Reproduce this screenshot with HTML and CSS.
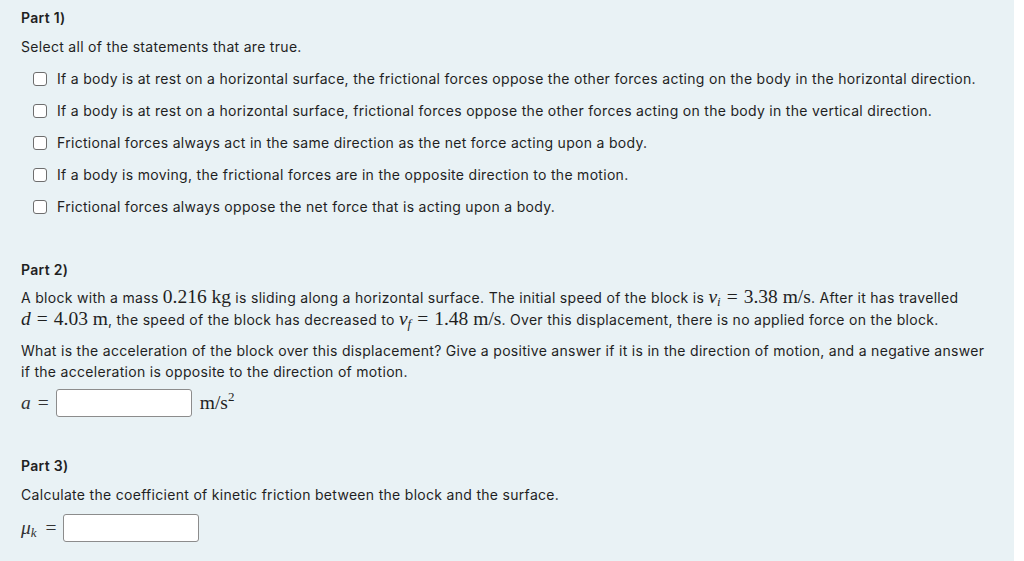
FILE: index.html
```html
<!DOCTYPE html>
<html>
<head>
<meta charset="utf-8">
<link rel="stylesheet" href="styles.css">
</head>
<body>
<div class="page">
  <section class="part part1">
    <h2 class="heading">Part 1)</h2>
    <p class="text">Select all of the statements that are true.</p>
    <ul class="choices">
      <li class="choice"><span class="box"></span><span>If a body is at rest on a horizontal surface, the frictional forces oppose the other forces acting on the body in the horizontal direction.</span></li>
      <li class="choice"><span class="box"></span><span>If a body is at rest on a horizontal surface, frictional forces oppose the other forces acting on the body in the vertical direction.</span></li>
      <li class="choice"><span class="box"></span><span>Frictional forces always act in the same direction as the net force acting upon a body.</span></li>
      <li class="choice"><span class="box"></span><span>If a body is moving, the frictional forces are in the opposite direction to the motion.</span></li>
      <li class="choice"><span class="box"></span><span>Frictional forces always oppose the net force that is acting upon a body.</span></li>
    </ul>
  </section>
  <section class="part part2">
    <h2 class="heading">Part 2)</h2>
    <p class="text para">A block with a mass <span class="m">0.216&nbsp;kg</span> is sliding along a horizontal surface. The initial speed of the block is <span class="m"><i>v</i><sub><i>i</i></sub><span class="eq">=</span>3.38&nbsp;m/s</span>. After it has travelled <span class="m"><i>d</i><span class="eq">=</span>4.03&nbsp;m</span>, the speed of the block has decreased to <span class="m"><i>v</i><sub><i>f</i></sub><span class="eq">=</span>1.48&nbsp;m/s</span>. Over this displacement, there is no applied force on the block.</p>
    <p class="text para2">What is the acceleration of the block over this displacement? Give a positive answer if it is in the direction of motion, and a negative answer if the acceleration is opposite to the direction of motion.</p>
    <div class="answer">
      <span class="m label"><i>a</i><span class="eq">=</span></span>
      <span class="field"></span>
      <span class="m unit">m/s<sup>2</sup></span>
    </div>
  </section>
  <section class="part part3">
    <h2 class="heading">Part 3)</h2>
    <p class="text">Calculate the coefficient of kinetic friction between the block and the surface.</p>
    <div class="answer answer3">
      <span class="m label"><i>μ</i><sub><i>k</i></sub><span class="eq">=</span></span>
      <span class="field"></span>
    </div>
  </section>
</div>
</body>
</html>
```
FILE: styles.css
```css
html, body {
  margin: 0;
  padding: 0;
  background: #ffffff;
}
.page {
  width: 1014px;
  height: 561px;
  box-sizing: border-box;
  background: #e9f2f5;
  padding: 7px 21px 0 21px;
  font-family: Inter, "Noto Sans", sans-serif;
  font-size: 14px;
  letter-spacing: 0.3px;
  line-height: 22px;
  color: #1f1f1f;
  overflow: hidden;
}
.heading {
  margin: 0;
  font-size: 14px;
  font-weight: 600;
  line-height: 22px;
}
.text {
  margin: 7px 0 0 0;
}
.choices {
  list-style: none;
  margin: 5px 0 0 0;
  padding: 0 0 0 12px;
}
.choice {
  display: flex;
  align-items: center;
  height: 32px;
  gap: 10px;
}
.box {
  width: 12px;
  height: 12px;
  border: 1.5px solid #6e6e6e;
  border-radius: 3px;
  background: #ffffff;
  flex: none;
}
.part2 {
  margin-top: 36px;
}
.m {
  font-family: "Liberation Serif", "Times New Roman", serif;
  font-size: 19.5px;
  letter-spacing: 0;
  line-height: 16px;
}
.eq {
  margin: 0 6px;
}
.m sub {
  font-size: 13px;
  line-height: 0;
  vertical-align: -3px;
}
.m sup {
  font-size: 13px;
  line-height: 0;
  vertical-align: 8px;
}
.para {
  margin-top: 6px;
}
.para2 {
  margin-top: 9px;
  line-height: 21px;
}
.answer {
  display: flex;
  align-items: center;
  margin-top: 7px;
  height: 28px;
}
.label {
  color: #333;
  margin-right: 0;
}
.label .eq {
  margin: 0 7px 0 7px;
}
.answer3 .label .eq {
  margin: 0 6px 0 9px;
}
.field {
  width: 134px;
  height: 26px;
  border: 1px solid #8c8c8c;
  border-radius: 3px;
  background: #ffffff;
}
.unit {
  margin-left: 8px;
}
.part3 {
  margin-top: 38px;
}
.answer3 {
  margin-top: 8px;
}
```
